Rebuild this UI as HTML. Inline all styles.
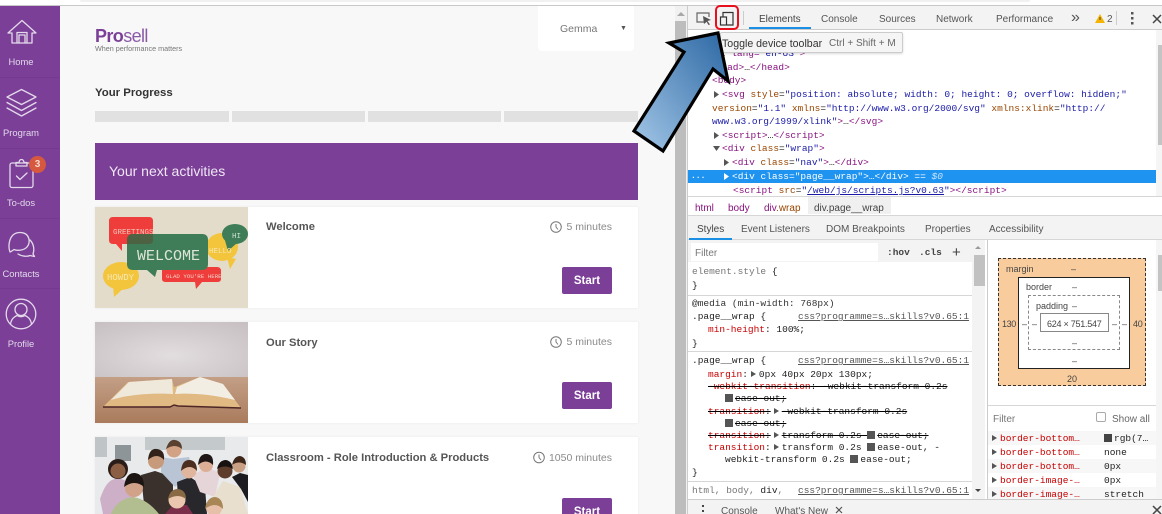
<!DOCTYPE html>
<html lang="en"><head><meta charset="utf-8"><title>Prosell DevTools</title>
<style>
html,body{margin:0;padding:0;background:#fff}
body{width:1162px;height:514px;overflow:hidden;position:relative;font-family:"Liberation Sans",sans-serif}
#w{position:absolute;left:0;top:0;width:1162px;height:514px;overflow:hidden;filter:blur(.3px)}
.b{position:absolute}
.t{position:absolute;white-space:pre;line-height:14px;font-size:10px;color:#444;margin-top:1px}
.m{position:absolute;white-space:pre;line-height:14px;font-family:"Liberation Mono",monospace;font-size:9.5px;color:#222;margin-top:1px}
.n{color:#e2d8ea;font-size:9.4px;width:42px;left:0;text-align:center}
.tag{color:#881280}.an{color:#994500}.av{color:#1a1aa6}
.p{color:#c80000}.g{color:#777}
.lk{color:#555;text-decoration:underline}
.s{text-decoration:line-through;text-decoration-color:#000}
.sw{display:inline-block;width:8px;height:8px;background:#555;vertical-align:-1px;margin-right:2px}
.tri{display:inline-block;width:0;height:0;border-left:5px solid #555;border-top:3px solid transparent;border-bottom:3px solid transparent}
.k{margin-left:3px}
.card{position:absolute;left:95px;width:543px;background:#fff;box-shadow:0 0 2px #e8e8e8}
.title{font-weight:bold;font-size:11.2px;color:#555;left:266px}
.time{color:#8a8a8a;font-size:10.5px;right:550px}
.st{position:absolute;left:562px;width:50px;height:27px;background:#7b3f98;border-radius:2px;color:#fff;font-weight:bold;font-size:11.5px;line-height:28px;text-align:center}
.line{position:absolute;background:#d6d6d6;height:1px}
.bx{font-size:9px}
</style></head><body><div id="w">

<!-- top chrome -->
<div class="b" style="left:80px;top:0;width:950px;height:2px;background:#f1f1f1;border-radius:0 0 6px 6px"></div>
<div class="b" style="left:0;top:5px;width:1162px;height:1px;background:#c8c8c8"></div>

<!-- page bg -->
<div class="b" style="left:60px;top:6px;width:615px;height:508px;background:#f8f8f8"></div>

<!-- sidebar -->
<div class="b" style="left:0;top:6px;width:60px;height:508px;background:#7b3f98"></div>
<svg class="b" style="left:0;top:0" width="60" height="514" fill="none" stroke="#e4d9ea" stroke-width="1.3" stroke-linejoin="round" stroke-linecap="round">
<path d="M8 33L22 20.500L36 33H32V43H12V33Z"/><path d="M17 43V32.500H27V43"/><path d="M19 43V35H25V43"/>
<path d="M21.500 89.500L36 97L21.500 104.500L7 97Z"/><path d="M7 102.500L21.500 110.500L36 102.500"/><path d="M7 108L21.500 116L36 108"/>
<rect x="10" y="163" width="23" height="24.500" rx="2"/><path d="M16 166V162.500H19C19.500 158.500 23.500 158.500 24 162.500H27V166Z"/><path d="M16.500 176L20 179.500L27 173"/>
<path d="M10 252C7.500 246 9 232.500 20 232.500C30 232.500 31 243 27 247C24 250.500 17 251 14 249.500C12.500 250.500 11.500 251.500 10 252Z"/><path d="M30 240C34 244 34.500 250 33 254L34.500 256.500L30 255.500C27.500 256.800 22 256.500 18 254"/>
<circle cx="21" cy="314" r="14.800"/><circle cx="21" cy="309.500" r="6"/><path d="M10.500 324C11.500 318 15 316.500 17 315.500C19.500 317 22.500 317 25 315.500C27 316.500 30.500 318 31.500 324"/>
</svg>
<div class="b" style="left:0;top:77px;width:60px;height:1px;background:#743a91"></div>
<div class="b" style="left:0;top:148px;width:60px;height:1px;background:#743a91"></div>
<div class="b" style="left:0;top:218px;width:60px;height:1px;background:#743a91"></div>
<div class="b" style="left:0;top:288px;width:60px;height:1px;background:#743a91"></div>
<div class="b" style="left:29px;top:156px;width:17px;height:17px;border-radius:50%;background:#d6593f;color:#f3d7cf;font-size:10px;line-height:17px;text-align:center;font-weight:bold">3</div>
<div class="t n" style="top:54px">Home</div>
<div class="t n" style="top:125px">Program</div>
<div class="t n" style="top:195px">To-dos</div>
<div class="t n" style="top:266px">Contacts</div>
<div class="t n" style="top:336px">Profile</div>

<!-- logo -->
<div class="t" style="left:95px;top:25px;font-size:18px;line-height:20px;color:#7b3f98;letter-spacing:-.6px"><b>Pro</b><span style="color:#8a5aa6">sell</span></div>
<div class="t" style="left:95px;top:41px;font-size:7.2px;color:#777">When performance matters</div>

<!-- user -->
<div class="b" style="left:538px;top:6px;width:96px;height:45px;background:#fff;border-radius:0 0 4px 4px"></div>
<div class="t" style="left:560px;top:21px;font-size:10.500px;color:#777">Gemma</div>
<div class="t" style="left:620px;top:21px;font-size:7px;color:#555">▼</div>

<div class="t" style="left:95px;top:85px;font-size:11.4px;font-weight:bold;color:#333">Your Progress</div>
<div class="b" style="left:95px;top:111px;width:134px;height:11px;background:#e1e1e1"></div>
<div class="b" style="left:232px;top:111px;width:133px;height:11px;background:#e1e1e1"></div>
<div class="b" style="left:368px;top:111px;width:133px;height:11px;background:#e1e1e1"></div>
<div class="b" style="left:504px;top:111px;width:134px;height:11px;background:#e1e1e1"></div>

<div class="b" style="left:95px;top:143px;width:543px;height:57px;background:#7b3f98"></div>
<div class="t" style="left:109px;top:163px;font-size:14px;color:#efe6f3">Your next activities</div>

<!-- cards -->
<div class="card" style="top:207px;height:101px"></div>
<div class="card" style="top:322px;height:101px"></div>
<div class="card" style="top:437px;height:80px"></div>

<!-- welcome image -->
<svg class="b" style="left:95px;top:207px" width="153" height="101" viewBox="0 0 153 101" font-family="Liberation Mono,monospace">
<rect width="153" height="101" fill="#e3dccb"/>
<path d="M18 10H54Q58 10 58 14V33Q58 37 54 37H27L27 44L21 37H18Q14 37 14 33V14Q14 10 18 10Z" fill="#ee3d3a"/>
<ellipse cx="127" cy="40" rx="16" ry="14" fill="#f2c53d"/><path d="M132 50L141 52L135 62Z" fill="#f2c53d"/>
<ellipse cx="26" cy="69" rx="18" ry="14" fill="#f2c53d"/><path d="M18 78L30 80L19 90Z" fill="#f2c53d"/>
<path d="M71 60H122Q126 60 126 64V72Q126 75 122 75H107L101 82L100 75H71Q67 75 67 72V64Q67 60 71 60Z" fill="#ee3d3a"/>
<path d="M38 27H107Q113 27 113 33V57Q113 63 107 63H62L60 70L52 63H38Q32 63 32 57V33Q32 27 38 27Z" fill="#3e7d57"/>
<path d="M38 27H58V33Q58 37 54 37H32V33Q32 27 38 27Z" fill="#5a4a33" opacity=".55"/>
<ellipse cx="140" cy="27" rx="13" ry="10" fill="#3e7d57"/><path d="M129 30L142 36L133 44Z" fill="#3e7d57"/>
<text x="18" y="27" font-size="7.500" fill="#f3c8bd">GREETINGS</text>
<text x="42" y="53" font-size="15" fill="#dfe6d8">WELCOME</text>
<text x="114" y="46" font-size="7.500" fill="#f8e7b0">HELLO</text>
<text x="137" y="31" font-size="7.500" fill="#cfe0d0">HI</text>
<text x="12" y="73" font-size="9" fill="#f8e7b0">HOWDY</text>
<text x="71" y="71" font-size="5.800" fill="#f6cfc6">GLAD YOU'RE HERE</text>
</svg>

<!-- book image -->
<svg class="b" style="left:95px;top:322px" width="153" height="101" viewBox="0 0 153 101">
<defs>
<radialGradient id="wall" cx=".5" cy=".6" r=".8"><stop offset="0" stop-color="#e2dddf"/><stop offset="1" stop-color="#c6bec1"/></radialGradient>
<linearGradient id="tbl" x1="0" y1="0" x2="0" y2="1"><stop offset="0" stop-color="#c39f86"/><stop offset="1" stop-color="#a97b5c"/></linearGradient>
</defs>
<rect width="153" height="55" fill="url(#wall)"/><rect y="55" width="153" height="46" fill="url(#tbl)"/>
<path d="M8 85L33 60L77 57L79 65L105 55L128 62L146 86L80 84Z" fill="#e0b983"/>
<path d="M16 78L34 60L77 57L78 72C60 71 35 72 16 78Z" fill="#efe9dc"/>
<path d="M80 72L82 65L105 55L128 62L140 78C115 72 95 71 80 72Z" fill="#f3eee3"/>
<path d="M8 85H75L79 83L83 84L146 86" fill="none" stroke="#4e2626" stroke-width="1.500"/>
</svg>

<!-- people image -->
<svg class="b" style="left:95px;top:437px" width="153" height="77" viewBox="0 0 153 77">
<rect width="153" height="77" fill="#e8eaec"/>
<rect x="50" y="0" width="80" height="13" fill="#c4c9cc"/><rect x="0" y="0" width="12" height="20" fill="#bfc4c7"/><rect x="20" y="8" width="16" height="16" fill="#8e9599"/>
<path d="M5 62Q12 40 23 42Q36 40 42 70V77H8Z" fill="#cdb0c8"/>
<path d="M50 77L46 38L60 34L78 40L78 77Z" fill="#3a312c"/>
<path d="M66 20L78 22L94 20L98 35L80 50L66 35Z" fill="#b9c4d4"/>
<path d="M84 77L82 45L95 40L110 50L112 77Z" fill="#28272c"/>
<path d="M98 38L112 30L125 36L120 60L105 55Z" fill="#e6d5d8"/>
<path d="M118 60L128 44L145 50L153 77H118Z" fill="#e8dfce"/>
<path d="M137 40L145 36L153 38V65L146 52Z" fill="#1c1c20"/>
<path d="M16 77Q22 62 38 60Q52 62 64 77Z" fill="#b2bd90"/>
<path d="M70 77L78 68H92L98 77Z" fill="#7a2e4a"/>
<circle cx="23" cy="32" r="10" fill="#2a1c18"/><circle cx="23" cy="34" r="7.500" fill="#8c5f45"/>
<circle cx="61" cy="24" r="8" fill="#c89a7c"/><path d="M53 23Q54 11 62 12Q70 13 69 23Q62 15 53 23Z" fill="#332219"/>
<circle cx="79" cy="13" r="7.500" fill="#d3a285"/><path d="M71 12Q74 2 80 3Q87 4 87 12Q80 6 71 12Z" fill="#59402f"/>
<circle cx="94" cy="34" r="7.500" fill="#e0b59e"/><path d="M86 34Q87 23 94 23Q102 23 102 34Q95 26 86 34Z" fill="#4c2e20"/>
<circle cx="111" cy="28" r="7" fill="#dcae96"/><path d="M103 28Q104 17 111 17Q119 17 118 28Q111 21 103 28Z" fill="#1e1715"/>
<circle cx="130" cy="34" r="7.500" fill="#5e3c2c"/><path d="M122 32Q124 23 131 23Q137 24 138 32Q130 27 122 32Z" fill="#17110f"/>
<circle cx="144" cy="29" r="6.500" fill="#caa084"/><path d="M137 28Q139 19 145 19Q151 20 151 28Q144 23 137 28Z" fill="#3d2619"/>
<circle cx="39" cy="51" r="9" fill="#d1a287"/><path d="M29 50Q31 35 40 36Q49 37 49 50Q40 42 29 50Z" fill="#1d1512"/>
<circle cx="82" cy="63" r="8.500" fill="#eac7ae"/><path d="M73 62Q75 52 83 52Q91 53 91 62Q83 56 73 62Z" fill="#8a6a45"/>
<circle cx="119" cy="71" r="8" fill="#e6c0a8"/><path d="M110 72Q112 60 120 60Q128 61 128 72Q120 64 110 72Z" fill="#a98655"/>
</svg>

<div class="t title" style="top:219px">Welcome</div>
<div class="t title" style="top:335px">Our Story</div>
<div class="t title" style="top:450px">Classroom - Role Introduction &amp; Products</div>
<div class="t time" style="top:219px">5 minutes</div>
<div class="t time" style="top:334px">5 minutes</div>
<div class="t time" style="top:450px">1050 minutes</div>
<svg class="b" style="left:530px;top:215px" width="40" height="250" fill="none" stroke="#777" stroke-width="1">
<circle cx="26" cy="12" r="5.300"/><path d="M26 9V12L28 14.500"/>
<circle cx="26" cy="127" r="5.300"/><path d="M26 124V127L28 129.500"/>
<circle cx="9" cy="242.500" r="5.300"/><path d="M9 239.500V242.500L11 245"/>
</svg>
<div class="st" style="top:267px">Start</div>
<div class="st" style="top:382px">Start</div>
<div class="st" style="top:498px">Start</div>

<!-- page scrollbar -->
<div class="b" style="left:675px;top:6px;width:12px;height:508px;background:#f1f1f1"></div>
<div class="b" style="left:675px;top:21px;width:11px;height:493px;background:#bdbdbd"></div>
<div class="b" style="left:677px;top:12px;width:0;height:0;border-left:4px solid transparent;border-right:4px solid transparent;border-bottom:4px solid #a8a8a8"></div>

<!-- devtools -->
<div class="b" style="left:688px;top:6px;width:474px;height:508px;background:#fff"></div>
<div class="b" style="left:687px;top:6px;width:1px;height:508px;background:#ccc"></div>
<div class="b" style="left:688px;top:6px;width:474px;height:23px;background:#f3f3f3"></div>
<div class="line" style="left:688px;top:29px;width:474px;background:#ccc"></div>
<svg class="b" style="left:695px;top:10px" width="20" height="16" fill="none">
<path d="M11 12H2V3H14V7" stroke="#666" stroke-width="1.200"/><path d="M8 6L16 10L12.500 11L15 14.500L13.500 15L11.500 11.800L9 14Z" fill="#555"/>
</svg>
<svg class="b" style="left:719px;top:11px" width="16" height="16" fill="none" stroke="#333" stroke-width="1.200">
<path d="M4 6V1.500H14V14H8"/><rect x="1.500" y="6" width="6" height="8"/>
</svg>
<div class="b" style="left:743px;top:11px;width:1px;height:14px;background:#ccc"></div>
<div class="t" style="left:759px;top:12px">Elements</div>
<div class="b" style="left:749px;top:27px;width:62px;height:2px;background:#1a8fe3"></div>
<div class="t" style="left:821px;top:12px;color:#555">Console</div>
<div class="t" style="left:879px;top:12px;color:#555">Sources</div>
<div class="t" style="left:936px;top:12px;color:#555">Network</div>
<div class="t" style="left:996px;top:12px;color:#555">Performance</div>
<div class="t" style="left:1071px;top:10px;font-size:16px;color:#555">»</div>
<svg class="b" style="left:1095px;top:13px" width="11" height="11"><path d="M5 1L10 10H0Z" fill="#f4b400"/><rect x="4.500" y="4" width="1" height="3" fill="#444"/></svg>
<div class="t" style="left:1107px;top:12px;color:#555">2</div>
<div class="b" style="left:1116px;top:11px;width:1px;height:14px;background:#ccc"></div>
<svg class="b" style="left:1130px;top:12px" width="6" height="13" fill="#555"><rect x="1" y="0" width="2.500" height="2.500"/><rect x="1" y="5" width="2.500" height="2.500"/><rect x="1" y="10" width="2.500" height="2.500"/></svg>
<svg class="b" style="left:1152px;top:14px" width="10" height="10" stroke="#444" stroke-width="1.500"><path d="M1 1L9 9M9 1L1 9"/></svg>

<!-- elements tree -->
<div class="m" style="left:697px;top:46px"><span class="tag">&lt;html lang=</span><span class="av">"en-US"</span><span class="tag">&gt;</span></div>
<div class="m" style="left:710px;top:60px"><span class="tag">&lt;head&gt;</span>…<span class="tag">&lt;/head&gt;</span></div>
<div class="m" style="left:712px;top:73px"><span class="tag">&lt;body&gt;</span></div>
<div class="m" style="left:722px;top:87px"><span class="tag">&lt;svg</span> <span class="an">style</span>=<span class="av">"position: absolute; width: 0; height: 0; overflow: hidden;"</span></div>
<div class="m" style="left:712px;top:101px"><span class="an">version</span>=<span class="av">"1.1"</span> <span class="an">xmlns</span>=<span class="av">"http://www.w3.org/2000/svg"</span> <span class="an">xmlns:xlink</span>=<span class="av">"http://</span></div>
<div class="m" style="left:712px;top:114px"><span class="av">www.w3.org/1999/xlink"</span><span class="tag">&gt;</span>…<span class="tag">&lt;/svg&gt;</span></div>
<div class="m" style="left:722px;top:128px"><span class="tag">&lt;script&gt;</span>…<span class="tag">&lt;/script&gt;</span></div>
<div class="m" style="left:722px;top:141px"><span class="tag">&lt;div</span> <span class="an">class</span>=<span class="av">"wrap"</span><span class="tag">&gt;</span></div>
<div class="m" style="left:732px;top:155px"><span class="tag">&lt;div</span> <span class="an">class</span>=<span class="av">"nav"</span><span class="tag">&gt;</span>…<span class="tag">&lt;/div&gt;</span></div>
<div class="b" style="left:688px;top:170px;width:468px;height:13px;background:#1f93f0"></div>
<div class="m" style="left:732px;top:169px;color:#fff">&lt;div class="page__wrap"&gt;…&lt;/div&gt; == <i style="opacity:.75">$0</i></div>
<div class="m" style="left:691px;top:169px;color:#fff;font-weight:bold;font-size:8px">...</div>
<div class="m" style="left:733px;top:183px"><span class="tag">&lt;script</span> <span class="an">src</span>=<span class="av">"<u>/web/js/scripts.js?v0.63</u>"</span><span class="tag">&gt;&lt;/script&gt;</span></div>
<svg class="b" style="left:709px;top:86px" width="30" height="100" fill="#555">
<path d="M5 5L10 8.500L5 12Z"/><path d="M5 46L10 49.500L5 53Z"/><path d="M4 60H11L7.500 65Z"/><path d="M15 73L20 76.500L15 80Z"/><path d="M15 87L20 90.500L15 94Z" fill="#fff"/>
</svg>
<div class="b" style="left:1156px;top:30px;width:6px;height:166px;background:#f5f5f5"></div>
<div class="b" style="left:1158px;top:45px;width:4px;height:100px;background:#c4c4c4"></div>

<!-- breadcrumbs -->
<div class="line" style="left:688px;top:196px;width:474px"></div>
<div class="b" style="left:808px;top:197px;width:83px;height:17px;background:#f0f0f0"></div>
<div class="t" style="left:695px;top:201px;color:#881280">html</div>
<div class="t" style="left:728px;top:201px;color:#881280">body</div>
<div class="t" style="left:764px;top:201px;color:#881280">div<span style="color:#994500">.wrap</span></div>
<div class="t" style="left:814px;top:201px;color:#444">div.page__wrap</div>
<div class="line" style="left:688px;top:215px;width:474px"></div>

<!-- style tabs -->
<div class="b" style="left:688px;top:216px;width:474px;height:23px;background:#f3f3f3"></div>
<div class="line" style="left:688px;top:239px;width:474px"></div>
<div class="t" style="left:697px;top:222px">Styles</div>
<div class="b" style="left:689px;top:238px;width:43px;height:2px;background:#1a8fe3"></div>
<div class="t" style="left:741px;top:222px;color:#555">Event Listeners</div>
<div class="t" style="left:826px;top:222px;color:#555">DOM Breakpoints</div>
<div class="t" style="left:925px;top:222px;color:#555">Properties</div>
<div class="t" style="left:989px;top:222px;color:#555">Accessibility</div>

<!-- filter -->
<div class="b" style="left:688px;top:240px;width:284px;height:22px;background:#f3f3f3"></div>
<div class="b" style="left:691px;top:243px;width:187px;height:18px;background:#fff"></div>
<div class="t" style="left:695px;top:246px;color:#777">Filter</div>
<div class="m" style="left:887px;top:245px;font-weight:bold;color:#444">:hov</div>
<div class="m" style="left:919px;top:245px;font-weight:bold;color:#444">.cls</div>
<div class="t" style="left:952px;top:245px;font-size:15px;color:#444">+</div>

<!-- rules -->
<div class="m g" style="left:692px;top:264px">element.style <span style="color:#222">{</span></div>
<div class="m" style="left:692px;top:278px">}</div>
<div class="line" style="left:688px;top:295px;width:284px"></div>
<div class="m" style="left:692px;top:296px;color:#333">@media (min-width: 768px)</div>
<div class="m" style="left:692px;top:309px">.page__wrap {</div>
<div class="m lk" style="left:798px;top:309px">css?programme=s…skills?v0.65:1</div>
<div class="m" style="left:708px;top:322px"><span class="p">min-height</span>: 100%;</div>
<div class="m" style="left:692px;top:336px">}</div>
<div class="line" style="left:688px;top:351px;width:284px"></div>
<div class="m" style="left:692px;top:353px">.page__wrap {</div>
<div class="m lk" style="left:798px;top:353px">css?programme=s…skills?v0.65:1</div>
<div class="m" style="left:708px;top:367px"><span class="p">margin</span>:<span class="tri" style="margin:0 3px 0 3px"></span>0px 40px 20px 130px;</div>
<div class="m s" style="left:708px;top:379px"><span class="p">-webkit-transition</span>: -webkit-transform 0.2s</div>
<div class="m s" style="left:725px;top:391px"><span class="sw"></span>ease-out;</div>
<div class="m s" style="left:708px;top:404px"><span class="p">transition</span>:<span class="tri" style="margin:0 3px 0 3px"></span>-webkit-transform 0.2s</div>
<div class="m s" style="left:725px;top:416px"><span class="sw"></span>ease-out;</div>
<div class="m s" style="left:708px;top:428px"><span class="p">transition</span>:<span class="tri" style="margin:0 3px 0 3px"></span>transform 0.2s <span class="sw"></span>ease-out;</div>
<div class="m" style="left:708px;top:440px"><span class="p">transition</span>:<span class="tri" style="margin:0 3px 0 3px"></span>transform 0.2s <span class="sw"></span>ease-out, -</div>
<div class="m" style="left:725px;top:452px">webkit-transform 0.2s <span class="sw"></span>ease-out;</div>
<div class="m" style="left:692px;top:465px">}</div>
<div class="line" style="left:688px;top:481px;width:284px"></div>
<div class="m" style="left:692px;top:483px;color:#777">html, body, <span style="color:#222">div</span>,</div>
<div class="m lk" style="left:798px;top:483px">css?programme=s…skills?v0.65:1</div>

<!-- style scrollbar -->
<div class="b" style="left:972px;top:240px;width:13px;height:259px;background:#f3f3f3"></div>
<div class="b" style="left:974px;top:255px;width:11px;height:31px;background:#c1c1c1"></div>
<div class="b" style="left:975px;top:246px;width:0;height:0;border-left:3px solid transparent;border-right:3px solid transparent;border-bottom:3px solid #999"></div>
<div class="b" style="left:975px;top:489px;width:0;height:0;border-left:3px solid transparent;border-right:3px solid transparent;border-top:3px solid #444"></div>
<div class="b" style="left:987px;top:240px;width:1px;height:259px;background:#ccc"></div>

<!-- box model -->
<div class="b" style="box-sizing:border-box;left:998px;top:258px;width:148px;height:128px;background:#f9cc9d;border:1px dashed #333"></div>
<div class="b" style="box-sizing:border-box;left:1018px;top:277px;width:112px;height:92px;background:#fff;border:1px solid #222"></div>
<div class="b" style="box-sizing:border-box;left:1028px;top:295px;width:92px;height:55px;background:#fff;border:1px dashed #888"></div>
<div class="b" style="box-sizing:border-box;left:1040px;top:313px;width:69px;height:19px;background:#fff;border:1px solid #888"></div>
<div class="t bx" style="left:1006px;top:261px">margin</div>
<div class="t bx" style="left:1026px;top:279px">border</div>
<div class="t bx" style="left:1036px;top:298px">padding</div>
<div class="t bx" style="left:1071px;top:261px">–</div>
<div class="t bx" style="left:1072px;top:279px">–</div>
<div class="t bx" style="left:1072px;top:298px">–</div>
<div class="t bx" style="left:1047px;top:316px;letter-spacing:-.25px">624 × 751.547</div>
<div class="t bx" style="left:1002px;top:316px;letter-spacing:-.4px">130</div>
<div class="t bx" style="left:1133px;top:316px;letter-spacing:-.3px">40</div>
<div class="t bx" style="left:1022px;top:316px">–</div>
<div class="t bx" style="left:1032px;top:316px">–</div>
<div class="t bx" style="left:1112px;top:316px">–</div>
<div class="t bx" style="left:1122px;top:316px">–</div>
<div class="t bx" style="left:1072px;top:335px">–</div>
<div class="t bx" style="left:1072px;top:353px">–</div>
<div class="t bx" style="left:1067px;top:371px">20</div>

<!-- computed -->
<div class="line" style="left:988px;top:405px;width:168px"></div>
<div class="t" style="left:993px;top:412px;color:#777">Filter</div>
<div class="b" style="box-sizing:border-box;left:1096px;top:412px;width:10px;height:10px;border:1px solid #aaa;border-radius:2px;background:#fff"></div>
<div class="t" style="left:1112px;top:412px;color:#666">Show all</div>
<div class="b" style="left:988px;top:431px;width:168px;height:14px;background:#f7f7f7"></div>
<div class="b" style="left:988px;top:459px;width:168px;height:14px;background:#f7f7f7"></div>
<div class="b" style="left:988px;top:487px;width:168px;height:12px;background:#f7f7f7"></div>
<div class="b" style="left:1156px;top:240px;width:6px;height:259px;background:#f5f5f5"></div>
<div class="b" style="left:1158px;top:255px;width:4px;height:36px;background:#c4c4c4"></div>
<div class="m" style="left:992px;top:431px"><span class="tri"></span><span class="p k">border-bottom…</span></div>
<div class="m" style="left:992px;top:445px"><span class="tri"></span><span class="p k">border-bottom…</span></div>
<div class="m" style="left:992px;top:459px"><span class="tri"></span><span class="p k">border-bottom…</span></div>
<div class="m" style="left:992px;top:473px"><span class="tri"></span><span class="p k">border-image-…</span></div>
<div class="m" style="left:992px;top:487px"><span class="tri"></span><span class="p k">border-image-…</span></div>
<div class="m" style="left:1104px;top:431px"><span class="sw" style="background:#444"></span>rgb(7…</div>
<div class="m" style="left:1104px;top:445px">none</div>
<div class="m" style="left:1104px;top:459px">0px</div>
<div class="m" style="left:1104px;top:473px">0px</div>
<div class="m" style="left:1104px;top:487px">stretch</div>

<!-- drawer -->
<div class="b" style="left:688px;top:499px;width:474px;height:15px;background:#f3f3f3;border-top:1px solid #ccc"></div>
<svg class="b" style="left:701px;top:505px" width="5" height="9" fill="#444"><rect x="1" y="0" width="2" height="2"/><rect x="1" y="5" width="2" height="2"/></svg>
<div class="t" style="left:721px;top:504px;color:#555">Console</div>
<div class="t" style="left:775px;top:504px;color:#555">What's New</div>
<svg class="b" style="left:835px;top:506px" width="8" height="8" stroke="#555" stroke-width="1.200"><path d="M1 1L7 7M7 1L1 7"/></svg>
<svg class="b" style="left:1152px;top:505px" width="10" height="9" stroke="#444" stroke-width="1.500"><path d="M1 1L9 9M9 1L1 9"/></svg>

<!-- tooltip -->
<div class="b" style="box-sizing:border-box;left:720px;top:32px;width:183px;height:21px;background:#f5f5f5;border:1px solid #ccc;border-radius:2px;box-shadow:0 1px 2px rgba(0,0,0,.15)"></div>
<div class="t" style="left:722px;top:36px;font-size:10.6px;color:#333">Toggle device toolbar</div>
<div class="t" style="left:829px;top:36px;font-size:10px;color:#666">Ctrl + Shift + M</div>

<!-- red highlight and arrow -->
<div class="b" style="box-sizing:border-box;left:715px;top:5px;width:24px;height:25px;border:2px solid #e8101c;border-radius:5px"></div>
<svg class="b" style="left:625px;top:25px" width="120" height="135">
<defs><linearGradient id="ar" x1="1" y1="0" x2="0" y2="1"><stop offset="0" stop-color="#2b67a3"/><stop offset="1" stop-color="#a5c8e8"/></linearGradient></defs>
<path d="M93 8L44 18L59 27L9 106L38 126L88 44L103 56Z" fill="url(#ar)" stroke="#000" stroke-width="3.200" stroke-linejoin="miter"/>
</svg>
</div></body></html>
